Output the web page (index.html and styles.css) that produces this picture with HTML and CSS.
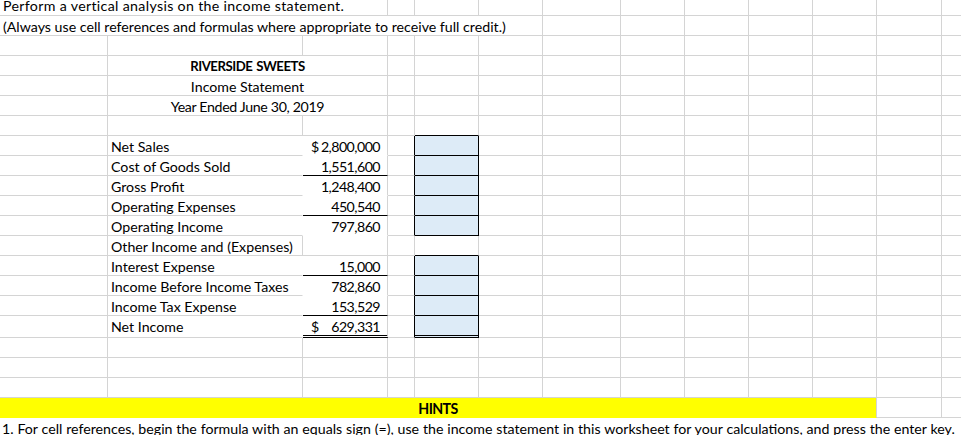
FILE: index.html
```html
<!DOCTYPE html>
<html>
<head>
<meta charset="utf-8">
<title>Vertical analysis</title>
<link rel="stylesheet" href="styles.css">
</head>
<body>
<div class="sheet">
  <div class="row top">
    <div class="c s3"><span class="lift">Perform a vertical analysis on the income statement.</span></div>
    <div class="c"></div><div class="c"></div><div class="c"></div><div class="c"></div><div class="c"></div><div class="c"></div><div class="c"></div><div class="c"></div><div class="c"></div><div class="c"></div>
  </div>
  <div class="row">
    <div class="c s6">(Always use cell references and formulas where appropriate to receive full credit.)</div>
    <div class="c"></div><div class="c"></div><div class="c"></div><div class="c"></div><div class="c"></div><div class="c"></div><div class="c"></div>
  </div>
  <div class="row">
    <div class="c"></div><div class="c"></div><div class="c"></div><div class="c"></div><div class="c"></div><div class="c"></div><div class="c"></div><div class="c"></div><div class="c"></div><div class="c"></div><div class="c"></div><div class="c"></div><div class="c"></div>
  </div>
  <div class="row">
    <div class="c"></div>
    <div class="c s2 ctr bold title">RIVERSIDE SWEETS</div>
    <div class="c"></div><div class="c"></div><div class="c"></div><div class="c"></div><div class="c"></div><div class="c"></div><div class="c"></div><div class="c"></div><div class="c"></div><div class="c"></div>
  </div>
  <div class="row">
    <div class="c"></div>
    <div class="c s2 ctr">Income Statement</div>
    <div class="c"></div><div class="c"></div><div class="c"></div><div class="c"></div><div class="c"></div><div class="c"></div><div class="c"></div><div class="c"></div><div class="c"></div><div class="c"></div>
  </div>
  <div class="row">
    <div class="c"></div>
    <div class="c s2 ctr tight">Year Ended June 30, 2019</div>
    <div class="c"></div><div class="c"></div><div class="c"></div><div class="c"></div><div class="c"></div><div class="c"></div><div class="c"></div><div class="c"></div><div class="c"></div><div class="c"></div>
  </div>
  <div class="row">
    <div class="c"></div><div class="c"></div><div class="c"></div><div class="c"></div>
    <div class="c bt"></div>
    <div class="c"></div><div class="c"></div><div class="c"></div><div class="c"></div><div class="c"></div><div class="c"></div><div class="c"></div><div class="c"></div>
  </div>

  <div class="row">
    <div class="c"></div>
    <div class="c lbl">Net Sales</div>
    <div class="c amt"><span>$</span><span class="num">2,800,000</span></div>
    <div class="c bl"></div>
    <div class="c box"></div>
    <div class="c"></div><div class="c"></div><div class="c"></div><div class="c"></div><div class="c"></div><div class="c"></div><div class="c"></div><div class="c"></div>
  </div>
  <div class="row">
    <div class="c"></div>
    <div class="c lbl">Cost of Goods Sold</div>
    <div class="c amt ul"><span></span><span class="num">1,551,600</span></div>
    <div class="c bl"></div>
    <div class="c box"></div>
    <div class="c"></div><div class="c"></div><div class="c"></div><div class="c"></div><div class="c"></div><div class="c"></div><div class="c"></div><div class="c"></div>
  </div>
  <div class="row">
    <div class="c"></div>
    <div class="c lbl">Gross Profit</div>
    <div class="c amt"><span></span><span class="num">1,248,400</span></div>
    <div class="c bl"></div>
    <div class="c box"></div>
    <div class="c"></div><div class="c"></div><div class="c"></div><div class="c"></div><div class="c"></div><div class="c"></div><div class="c"></div><div class="c"></div>
  </div>
  <div class="row">
    <div class="c"></div>
    <div class="c lbl">Operating Expenses</div>
    <div class="c amt ul"><span></span><span class="num">450,540</span></div>
    <div class="c bl"></div>
    <div class="c box"></div>
    <div class="c"></div><div class="c"></div><div class="c"></div><div class="c"></div><div class="c"></div><div class="c"></div><div class="c"></div><div class="c"></div>
  </div>
  <div class="row">
    <div class="c"></div>
    <div class="c lbl">Operating Income</div>
    <div class="c amt"><span></span><span class="num">797,860</span></div>
    <div class="c bl"></div>
    <div class="c box"></div>
    <div class="c"></div><div class="c"></div><div class="c"></div><div class="c"></div><div class="c"></div><div class="c"></div><div class="c"></div><div class="c"></div>
  </div>
  <div class="row">
    <div class="c"></div>
    <div class="c">Other Income and (Expenses)</div>
    <div class="c"></div>
    <div class="c"></div>
    <div class="c bt"></div>
    <div class="c"></div><div class="c"></div><div class="c"></div><div class="c"></div><div class="c"></div><div class="c"></div><div class="c"></div><div class="c"></div>
  </div>
  <div class="row">
    <div class="c"></div>
    <div class="c lbl">Interest Expense</div>
    <div class="c amt ul"><span></span><span class="num">15,000</span></div>
    <div class="c bl"></div>
    <div class="c box"></div>
    <div class="c"></div><div class="c"></div><div class="c"></div><div class="c"></div><div class="c"></div><div class="c"></div><div class="c"></div><div class="c"></div>
  </div>
  <div class="row">
    <div class="c"></div>
    <div class="c lbl">Income Before Income Taxes</div>
    <div class="c amt"><span></span><span class="num">782,860</span></div>
    <div class="c bl"></div>
    <div class="c box"></div>
    <div class="c"></div><div class="c"></div><div class="c"></div><div class="c"></div><div class="c"></div><div class="c"></div><div class="c"></div><div class="c"></div>
  </div>
  <div class="row">
    <div class="c"></div>
    <div class="c lbl">Income Tax Expense</div>
    <div class="c amt ul"><span></span><span class="num">153,529</span></div>
    <div class="c bl"></div>
    <div class="c box"></div>
    <div class="c"></div><div class="c"></div><div class="c"></div><div class="c"></div><div class="c"></div><div class="c"></div><div class="c"></div><div class="c"></div>
  </div>
  <div class="row tall">
    <div class="c"></div>
    <div class="c lbl">Net Income</div>
    <div class="c amt dbl"><span>$</span><span class="num">629,331</span></div>
    <div class="c bl"></div>
    <div class="c box dbl"></div>
    <div class="c"></div><div class="c"></div><div class="c"></div><div class="c"></div><div class="c"></div><div class="c"></div><div class="c"></div><div class="c"></div>
  </div>

  <div class="row">
    <div class="c"></div><div class="c"></div><div class="c"></div><div class="c"></div><div class="c"></div><div class="c"></div><div class="c"></div><div class="c"></div><div class="c"></div><div class="c"></div><div class="c"></div><div class="c"></div><div class="c"></div>
  </div>
  <div class="row">
    <div class="c"></div><div class="c"></div><div class="c"></div><div class="c"></div><div class="c"></div><div class="c"></div><div class="c"></div><div class="c"></div><div class="c"></div><div class="c"></div><div class="c"></div><div class="c"></div><div class="c"></div>
  </div>
  <div class="row">
    <div class="c"></div><div class="c"></div><div class="c"></div><div class="c"></div><div class="c"></div><div class="c"></div><div class="c"></div><div class="c"></div><div class="c"></div><div class="c"></div><div class="c"></div><div class="c"></div><div class="c"></div>
  </div>
  <div class="row">
    <div class="c s11 ctr bold hint">HINTS</div>
    <div class="c"></div><div class="c"></div>
  </div>
  <div class="row last">
    <div class="c s13 plain">1. For cell references, begin the formula with an equals sign (=), use the income statement in this worksheet for your calculations, and press the enter key.</div>
  </div>
</div>
</body>
</html>
```

FILE: styles.css
```css
html, body {
  margin: 0;
  padding: 0;
  background: #ffffff;
  overflow: hidden;
}

.sheet {
  width: 961px;
  font-family: "Lato", "Open Sans", sans-serif;
  font-size: 14.2px;
  color: #000000;
}

.row {
  display: grid;
  grid-template-columns: 108px 195px 85px 27px 64px 64px 78px 64px 64px 64px 64px 65px 19px;
  grid-template-rows: minmax(0, 1fr);
  height: 20px;
}

.row.top { height: 16px; }
.row.tall { height: 22px; }
.row.last { height: 17px; }

.c {
  box-sizing: border-box;
  border-right: 1px solid #d4d4d4;
  border-bottom: 1px solid #d4d4d4;
  padding: 2px 3px 0;
  line-height: 17px;
  white-space: nowrap;
  overflow: visible;
  min-width: 0;
  min-height: 0;
}

.c:last-child { border-right: 0; }

.lift {
  display: block;
  margin-top: -5px;
  letter-spacing: 0.33px;
}

.s2 { grid-column: span 2; }
.s3 { grid-column: span 3; }
.s6 { grid-column: span 6; }
.s11 { grid-column: span 11; }
.s13 { grid-column: span 13; }

.ctr { text-align: center; }
.bold { font-weight: 700; }
.title {
  font-size: 13.2px;
  letter-spacing: -0.45px;
  word-spacing: 1px;
}
.tight { letter-spacing: -0.35px; }
.num { letter-spacing: -0.55px; }

.lbl { border-right-color: #ffffff; }

.amt {
  display: flex;
  justify-content: space-between;
  padding: 2px 7px 0 8px;
  border-bottom-color: #ffffff;
}

.amt.ul { border-bottom: 1px solid #000000; }
.amt.dbl, .box.dbl { border-bottom: 3px double #000000; }

.bl { border-right-color: #000000; }
.bt { border-bottom-color: #000000; }

.box {
  background: #ddebf7;
  border-right-color: #000000;
  border-bottom-color: #000000;
}

.hint {
  background: #ffff00;
  border-bottom-color: #ffff00;
  letter-spacing: -0.6px;
}

.plain {
  border: 0;
  padding-left: 2px;
  word-spacing: 0.2px;
}
```
